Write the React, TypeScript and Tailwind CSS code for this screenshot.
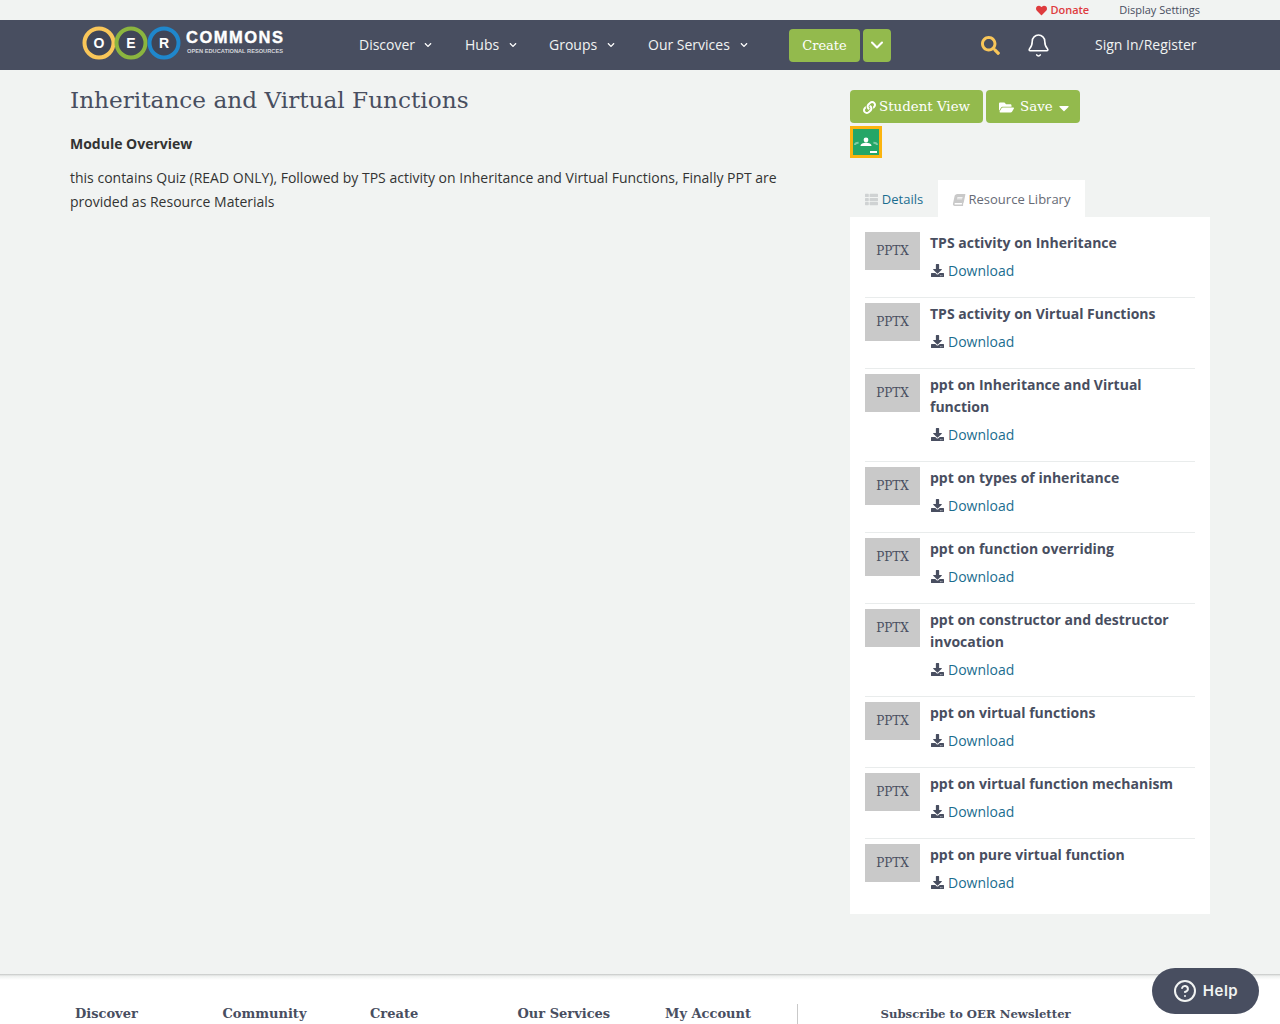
import { FaHeart, FaLink, FaFolderOpen, FaCaretDown, FaThList, FaBook, FaDownload, FaSearch, FaChevronDown } from "react-icons/fa"
import { Bell, ChevronDown, CircleHelp } from "lucide-react"

const slab = { fontFamily: '"DejaVu Serif", serif' }

const navItems = [
    { label: "Discover", ml: "ml-0", w: "w-[55px]" },
    { label: "Hubs", ml: "ml-[32px]", w: "w-[34px]" },
    { label: "Groups", ml: "ml-[31px]", w: "w-[48px]" },
    { label: "Our Services", ml: "ml-[32px]", w: "w-[82px]" },
]

const resources = [
    "TPS activity on Inheritance",
    "TPS activity on Virtual Functions",
    "ppt on Inheritance and Virtual function",
    "ppt on types of inheritance",
    "ppt on function overriding",
    "ppt on constructor and destructor invocation",
    "ppt on virtual functions",
    "ppt on virtual function mechanism",
    "ppt on pure virtual function",
]

const footerCols = ["Discover", "Community", "Create", "Our Services", "My Account"]

function Logo() {
    const rings = [
        { cx: 17, color: "#f9c659", letter: "O" },
        { cx: 49, color: "#8bb53f", letter: "E" },
        { cx: 82, color: "#1f87cc", letter: "R" },
    ]
    return (
        <svg width="220" height="36" viewBox="0 0 220 36">
            {rings.map((r) => (
                <g key={r.letter}>
                    <circle cx={r.cx} cy="17" r="14.5" fill="#3f4557" stroke={r.color} strokeWidth="4" />
                    <text x={r.cx} y="22" textAnchor="middle" fontSize="14" fontWeight="700" fill="#fff" fontFamily="Liberation Sans">{r.letter}</text>
                </g>
            ))}
            <text x="104" y="17" fontSize="16.5" fontWeight="700" fill="#fff" fontFamily="Liberation Sans" textLength="97" stroke="#fff" strokeWidth="0.4">COMMONS</text>
            <text x="105" y="27" fontSize="6" fontWeight="700" fill="#d5d7dc" fontFamily="Liberation Sans" textLength="96" lengthAdjust="spacingAndGlyphs">OPEN EDUCATIONAL RESOURCES</text>
        </svg>
    )
}

function ClassroomIcon() {
    return (
        <div className="w-8 h-8 border-[3px] border-[#fbb40f] bg-[#25a667]">
            <svg width="26" height="26" viewBox="0 0 26 26">
                <circle cx="13" cy="11" r="2.4" fill="#fff" />
                <path d="M7.5 17c0-2.3 2.6-3.2 5.5-3.2s5.5.9 5.5 3.2z" fill="#fff" />
                <path d="M2 16c0-1.6 1.6-2.3 3.6-2.3M24 16c0-1.6-1.6-2.3-3.6-2.3" stroke="#7fcca5" strokeWidth="2" fill="none" />
                <rect x="17" y="22" width="7" height="2" fill="#fff" />
            </svg>
        </div>
    )
}

function ResourceItem({ title, first }: { title: string; first: boolean }) {
    return (
        <div className={first ? "flex gap-[10px] pb-[16px]" : "flex gap-[10px] pt-[5px] pb-[16px] border-t border-[#e9ecec]"}>
            <div className="w-[55px] h-[38px] shrink-0 bg-[#c9c9c9] flex items-center justify-center text-[12px] text-[#484e60]" style={slab}>
                PPTX
            </div>
            <div className="flex-1">
                <h4 className="text-[14px] leading-[22px] font-bold text-[#484e60]">{title}</h4>
                <div className="mt-[5px] h-[22px] flex items-center text-[14px] text-[#1b6d8f]">
                    <FaDownload className="text-[#484e60] text-[13px] ml-[1px] mr-[4px]" />
                    <span>Download</span>
                </div>
            </div>
        </div>
    )
}

export default function App() {
    return (
        <div className="relative h-[1024px] overflow-hidden bg-[#f1f3f2]" style={{ fontFamily: '"Open Sans", sans-serif' }}>
            {/* top strip */}
            <div className="h-5 flex items-center justify-end pr-[80px] text-[11px]">
                <span className="flex items-center gap-[3px] font-semibold text-[#de3b3e]">
                    <FaHeart className="text-[11px]" /> Donate
                </span>
                <span className="ml-[30px] text-[#484e60]">Display Settings</span>
            </div>

            {/* nav */}
            <nav className="h-[50px] bg-[#484e60] flex items-center text-white text-[14px]">
                <div className="ml-[82px] w-[277px] shrink-0 h-[36px] mb-[2px]"><Logo /></div>
                {navItems.map((n) => (
                    <div key={n.label} className={`${n.ml} flex items-center`}>
                        <span className={`${n.w} mb-[2px] whitespace-nowrap text-[#f1f3f2]`}>{n.label}</span>
                        <FaChevronDown className="ml-[10px] mr-[1px] text-[8px] text-white" />
                    </div>
                ))}
                <div className="ml-[40px] w-[71px] h-[33px] pt-[2px] rounded-[4px] bg-[#93ba4d] flex items-center justify-center text-[13px]" style={slab}>Create</div>
                <div className="ml-[3px] w-[28px] h-[33px] rounded-[4px] bg-[#93ba4d] flex items-center justify-center"><ChevronDown size={20} strokeWidth={2.5} /></div>
                <FaSearch className="ml-[90px] text-[19px] text-[#f9c659]" />
                <Bell size={25} strokeWidth={1.5} className="ml-[26px] text-white" />
                <span className="ml-[44px] mb-[2px] whitespace-nowrap text-[#f1f3f2]">Sign In/Register</span>
            </nav>

            {/* main */}
            <main className="flex pl-[70px]">
                <div className="w-[780px] shrink-0 pt-[14px]">
                    <h1 className="text-[23.2px] leading-[32px] text-[#484e60]" style={slab}>Inheritance and Virtual Functions</h1>
                    <p className="mt-[16px] text-[14px] leading-[24px] font-bold text-[#333]">Module Overview</p>
                    <p className="mt-[10px] w-[720px] text-[14px] leading-[24px] text-[#333]">
                        this contains Quiz (READ ONLY), Followed by TPS activity on Inheritance and Virtual Functions, Finally PPT are provided as Resource Materials
                    </p>
                </div>
                <aside className="w-[360px] shrink-0 pt-[20px]">
                    <div className="flex gap-[3px] text-white text-[13.4px]" style={slab}>
                        <div className="h-[33px] w-[133px] pl-[13px] pt-[2px] rounded-[4px] bg-[#93ba4d] flex items-center gap-[3px]">
                            <FaLink className="text-[13px]" /> Student View
                        </div>
                        <div className="h-[33px] w-[94px] pl-[13px] pt-[2px] rounded-[4px] bg-[#93ba4d] flex items-center">
                            <FaFolderOpen className="text-[15px] mr-[6px]" /> Save <FaCaretDown className="ml-[3px] text-[16px]" />
                        </div>
                    </div>
                    <div className="mt-[3px]"><ClassroomIcon /></div>

                    <div className="mt-[22px] flex h-[37px] text-[13px]">
                        <div className="w-[88px] pt-[2px] flex items-center justify-center gap-[4px] text-[#1b6d8f]">
                            <FaThList className="text-[#cfd2d3] text-[13px]" /> Details
                        </div>
                        <div className="w-[147px] pt-[2px] bg-white flex items-center justify-center gap-[4px] text-[#666a75]">
                            <FaBook className="text-[#c9c9c9] text-[12px] -skew-x-12" /> Resource Library
                        </div>
                    </div>
                    <div className="bg-white px-[15px] pt-[15px] pb-[5px]">
                        {resources.map((r, i) => (
                            <ResourceItem key={r} title={r} first={i === 0} />
                        ))}
                    </div>
                </aside>
            </main>

            {/* footer */}
            <footer className="mt-[60px] h-[60px] bg-[linear-gradient(#c4c6c5_0,#eef0ef_2px,#ffffff_6px)] flex pt-[30px] pl-[75px] text-[#484e60] font-bold text-[13px]" style={slab}>
                {footerCols.map((c) => (
                    <div key={c} className="w-[147.5px] shrink-0 leading-[20px] whitespace-nowrap">{c}</div>
                ))}
                <div className="ml-[-16px] w-px h-[30px] bg-[#c9c9c9]" />
                <div className="ml-[83px] leading-[20px] text-[11.7px] whitespace-nowrap">Subscribe to OER Newsletter</div>
            </footer>

            {/* help button */}
            <div className="absolute left-[1152px] top-[968px] w-[107px] h-[46px] rounded-[23px] bg-[#484e60] flex items-center justify-center gap-[6px] text-[#f1f3f2] text-[15px] font-semibold tracking-[0.5px]" style={{ fontFamily: "Inter, sans-serif" }}>
                <CircleHelp size={24} strokeWidth={2} /> Help
            </div>
        </div>
    )
}
